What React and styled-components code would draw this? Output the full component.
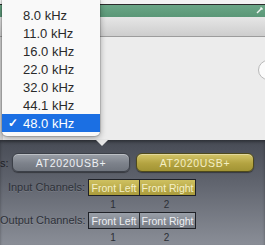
import React from "react";
import styled, { createGlobalStyle } from "styled-components";

const Global = createGlobalStyle`
  html, body { margin: 0; padding: 0; overflow: hidden; }
  body { width: 265px; height: 245px; font-family: "Liberation Sans", Arial, sans-serif; }
`;

const Page = styled.div`
  position: relative;
  width: 265px;
  height: 245px;
  display: flex;
  flex-direction: column;
  overflow: hidden;
`;

const TopStrip = styled.div`
  height: 4px;
  background: #f3f3f3;
  border-bottom: 1px solid #2c2c2c;
`;

const GreenBar = styled.div`
  height: 12px;
  background: linear-gradient(#6aa686, #5a9777);
  display: flex;
  justify-content: flex-end;
  align-items: center;
  padding-right: 2px;
`;

const Toolbar = styled.div`
  height: 20px;
  background: linear-gradient(#e6e6e6, #cdcdcd);
  border-bottom: 1px solid #9c9c9c;
`;

const Panel = styled.div`
  position: relative;
  height: 104px;
  background: #ececec;
  border-left: 3px solid #d2d2d2;
  display: flex;
  justify-content: flex-end;
  align-items: flex-start;
  padding-top: 23px;
  box-sizing: border-box;
  &::after {
    content: "";
    position: absolute;
    left: 92px;
    bottom: -6px;
    width: 0;
    height: 0;
    border-left: 7px solid transparent;
    border-right: 7px solid transparent;
    border-top: 7px solid #e6e6e6;
    z-index: 1;
  }
`;

const RoundKnob = styled.div`
  width: 18px;
  height: 18px;
  border-radius: 50%;
  background: #fbfbfb;
  border: 1px solid #b8b8b8;
  margin-right: -13px;
`;

const DarkArea = styled.div`
  flex: 1;
  background: linear-gradient(#474b55, #60646e 40%, #8a8e97);
  box-shadow: inset 0 2px 3px rgba(0, 0, 0, 0.35);
  padding-top: 13px;
  display: flex;
  flex-direction: column;
`;

const ButtonRow = styled.div`
  display: flex;
  align-items: center;
  gap: 6px;
  height: 19px;
`;

const SideLabel = styled.span`
  width: 12px;
  font-size: 11px;
  color: #1e2026;
  text-align: left;
`;

const DeviceButton = styled.div`
  width: 118px;
  height: 19px;
  box-sizing: border-box;
  border-radius: 6px;
  display: flex;
  align-items: center;
  justify-content: center;
  font-size: 10.5px;
  letter-spacing: 0.7px;
  border: 1px solid ${(p) => (p.$gold ? "#4f4a1c" : "#3c4048")};
  background: ${(p) =>
    p.$gold
      ? "linear-gradient(#d4c66a, #b3a341 55%, #a29434)"
      : "linear-gradient(#9ba0a8, #7d828b 55%, #6f747d)"};
  color: ${(p) => (p.$gold ? "#f4efc4" : "#eef0f4")};
  box-shadow: inset 0 1px 0 rgba(255, 255, 255, 0.35), 0 1px 1px rgba(0, 0, 0, 0.4);
  margin-left: ${(p) => (p.$first ? "-6px" : "0")};
`;

const ChannelGrid = styled.div`
  display: grid;
  grid-template-columns: 88px auto;
  margin-top: 7px;
`;

const RowLabel = styled.div`
  font-size: 11px;
  color: #2e3139;
  text-align: right;
  padding-right: 3px;
  height: 17px;
  line-height: 17px;
  white-space: nowrap;
  overflow: visible;
  text-shadow: 0 1px 0 rgba(255, 255, 255, 0.12);
`;

const Segments = styled.div`
  display: flex;
  height: 17px;
  box-sizing: border-box;
  border: 1px solid #1f2127;
  width: 108px;
`;

const Segment = styled.div`
  width: ${(p) => p.$w}px;
  display: flex;
  align-items: center;
  justify-content: center;
  font-size: 10.5px;
  letter-spacing: 0;
  white-space: nowrap;
  color: ${(p) => (p.$gold ? "#f5f0c8" : "#eef0f4")};
  background: ${(p) =>
    p.$gold
      ? "linear-gradient(#cfc160, #aa9b3b)"
      : "linear-gradient(#9aa0a9, #737881)"};
  & + & {
    border-left: 1px solid #2a2c30;
  }
`;

const NumberRow = styled.div`
  grid-column: 2;
  display: flex;
  height: 16px;
  align-items: center;
  font-size: 10px;
  color: #2c2f36;
`;

const Num = styled.span`
  width: ${(p) => p.$w}px;
  text-align: center;
`;

const Menu = styled.div`
  position: absolute;
  left: 2px;
  top: 0;
  width: 98px;
  padding: 6px 0 4px;
  background: #f9f9f9;
  border-radius: 0 0 5px 5px;
  box-shadow: 0 2px 6px rgba(0, 0, 0, 0.35), 0 0 0 1px rgba(0, 0, 0, 0.12);
  z-index: 5;
`;

const MenuItem = styled.div`
  height: 18px;
  display: flex;
  align-items: center;
  font-size: 13px;
  color: ${(p) => (p.$selected ? "#ffffff" : "#2a2a2a")};
  background: ${(p) => (p.$selected ? "#1b6fe3" : "transparent")};
  padding-left: 6px;
`;

const Check = styled.span`
  width: 15px;
  font-size: 12px;
  font-weight: bold;
`;

const rates = ["8.0 kHz", "11.0 kHz", "16.0 kHz", "22.0 kHz", "32.0 kHz", "44.1 kHz", "48.0 kHz"];

function ChannelRow({ label, gold }) {
  return (
    <>
      <RowLabel>{label}</RowLabel>
      <Segments>
        <Segment $gold={gold} $w={51}>Front Left</Segment>
        <Segment $gold={gold} $w={56}>Front Right</Segment>
      </Segments>
      <NumberRow>
        <Num $w={50}>1</Num>
        <Num $w={57}>2</Num>
      </NumberRow>
    </>
  );
}

export default function App() {
  return (
    <Page>
      <Global />
      <TopStrip />
      <GreenBar>
        <svg width="7" height="7" viewBox="0 0 7 7">
          <path d="M1 6 L6 1" stroke="#eef4f0" strokeWidth="1.5" />
          <path d="M4 1 L6 1 L6 3" stroke="#eef4f0" strokeWidth="1" fill="none" />
        </svg>
      </GreenBar>
      <Toolbar />
      <Panel>
        <RoundKnob />
      </Panel>
      <DarkArea>
        <ButtonRow>
          <SideLabel>s:</SideLabel>
          <DeviceButton $first>AT2020USB+</DeviceButton>
          <DeviceButton $gold>AT2020USB+</DeviceButton>
        </ButtonRow>
        <ChannelGrid>
          <ChannelRow label="Input Channels:" gold />
          <ChannelRow label="Output Channels:" />
        </ChannelGrid>
      </DarkArea>
      <Menu>
        {rates.map((r) => (
          <MenuItem key={r} $selected={r === "48.0 kHz"}>
            <Check>{r === "48.0 kHz" ? "✓" : ""}</Check>
            {r}
          </MenuItem>
        ))}
      </Menu>
    </Page>
  );
}
